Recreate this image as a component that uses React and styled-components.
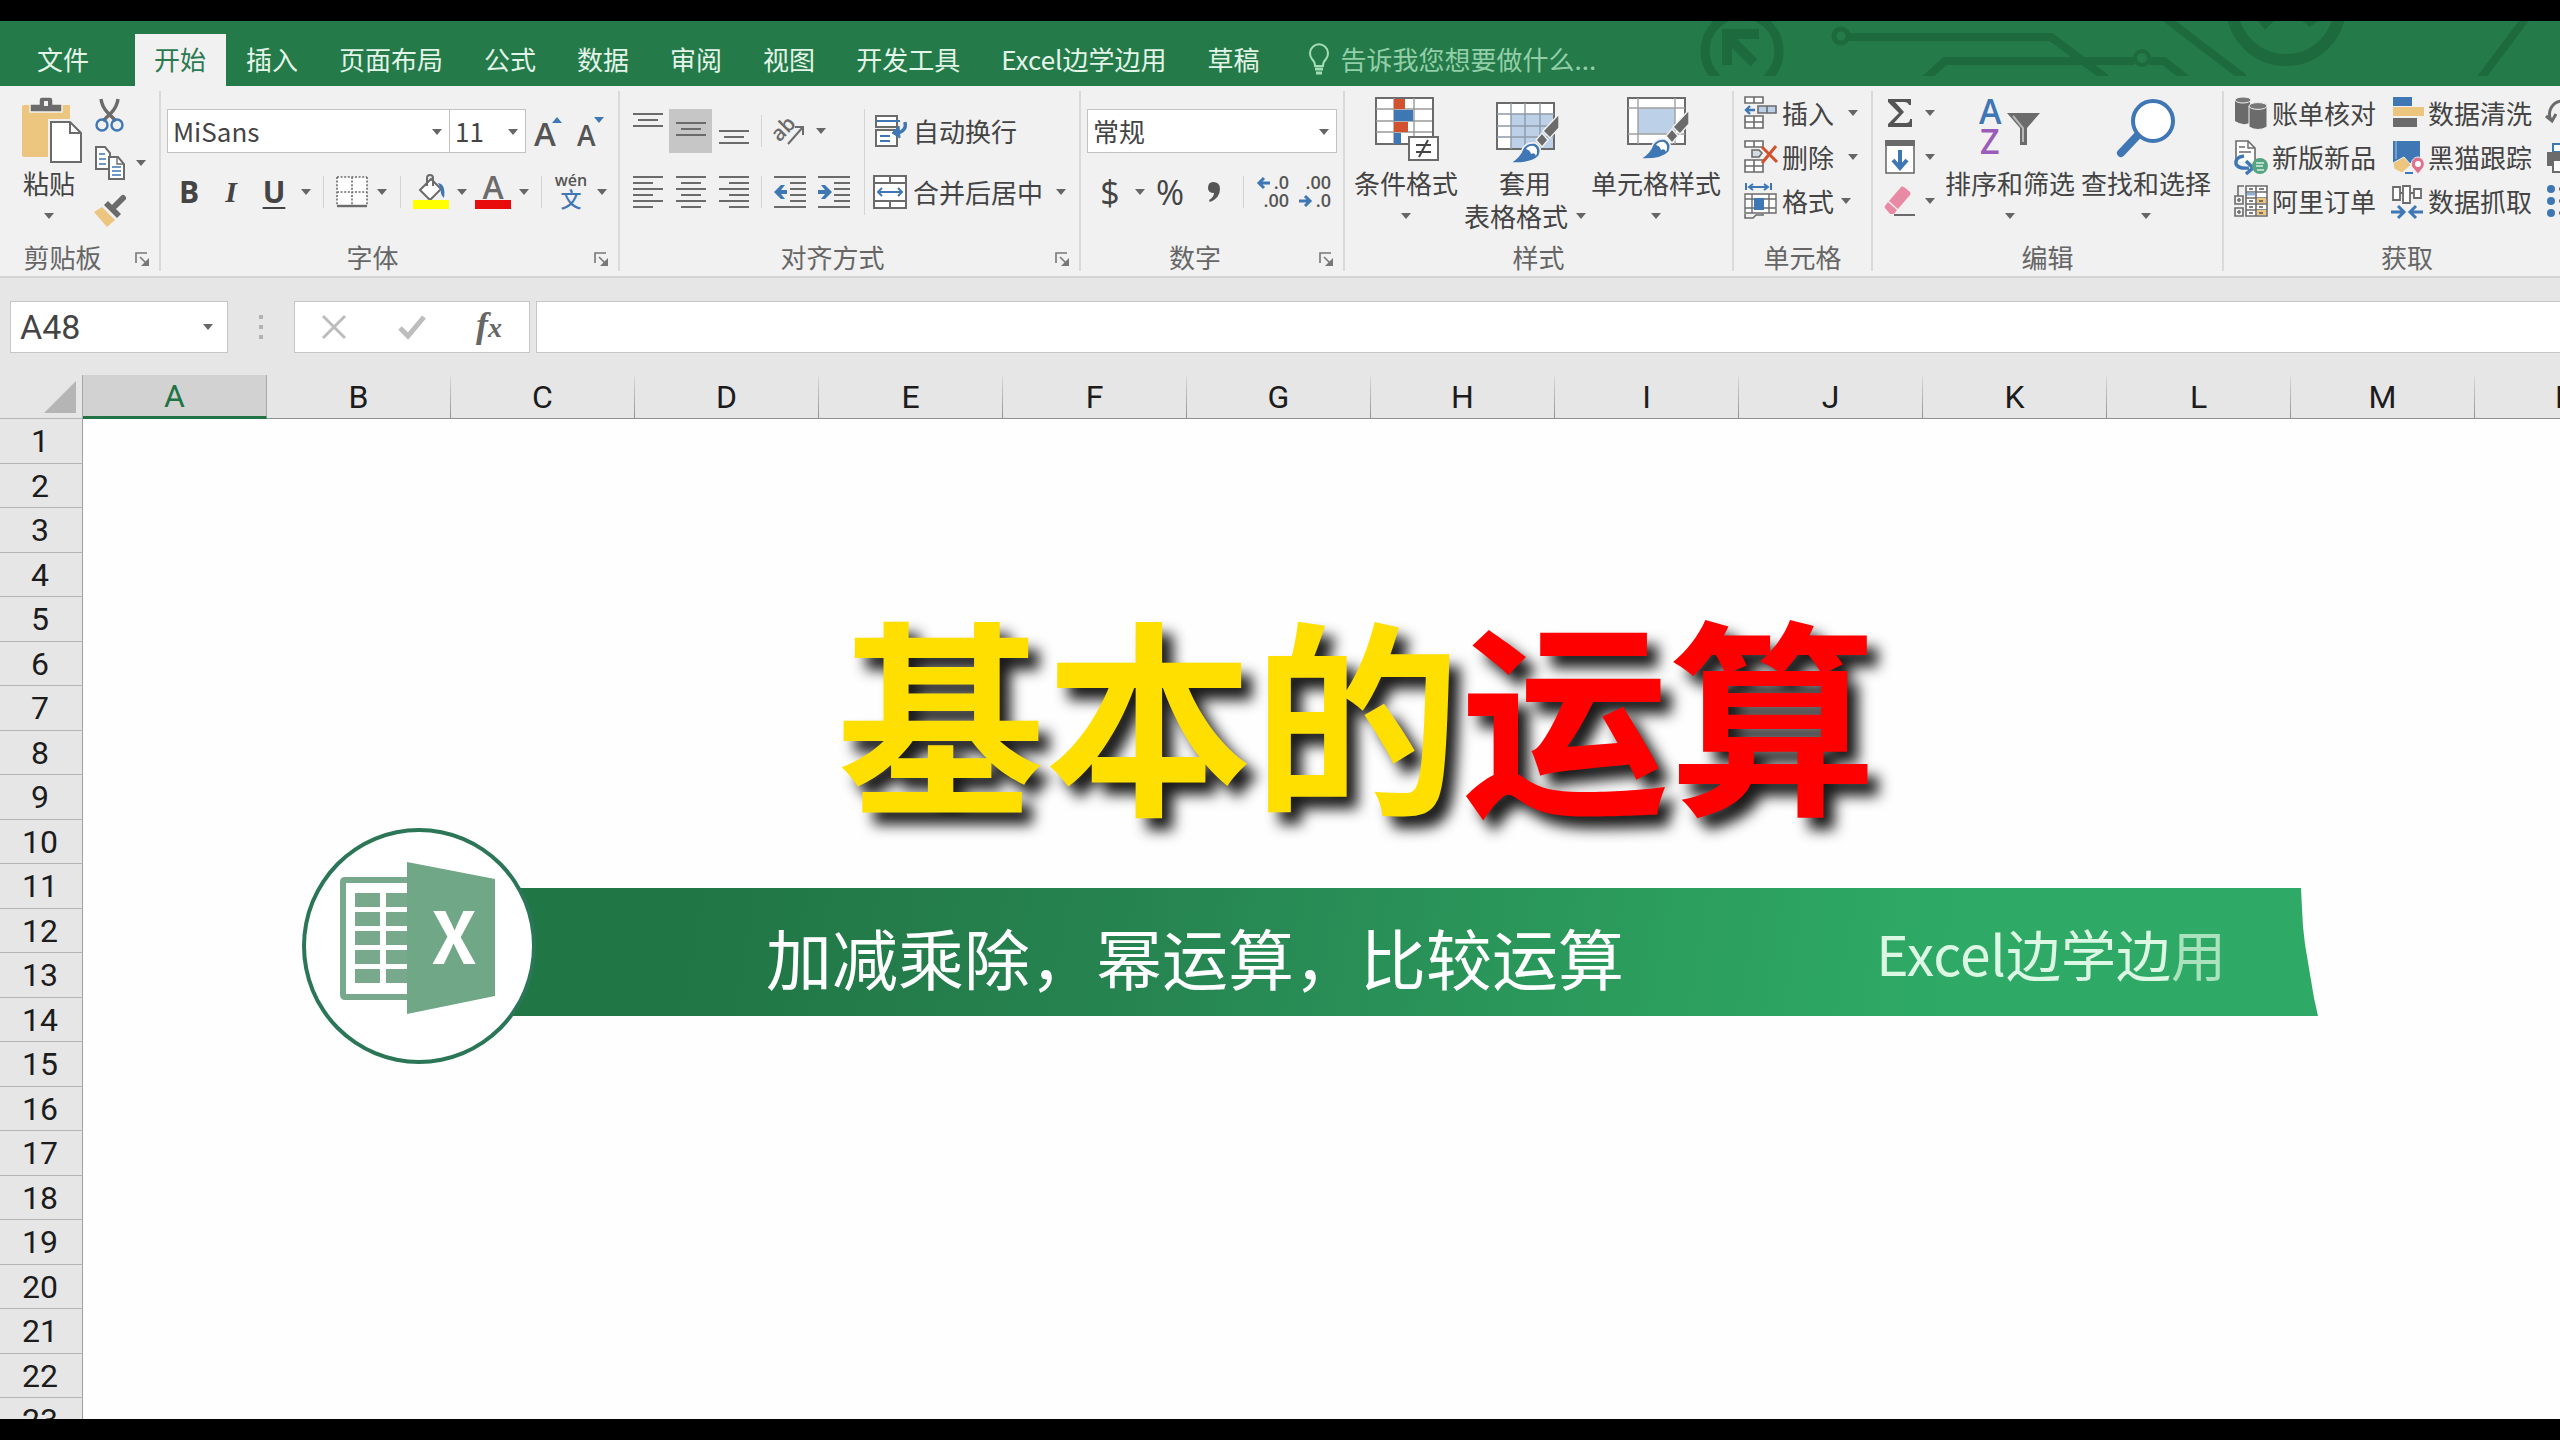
import React from 'react';
import styled, { createGlobalStyle, css } from 'styled-components';

const GREY = '#6b6b6b';
const BLUE = '#3f77b5';
const RED = '#d2512e';
const SAND = '#ecc57f';
const UI_FONT = '"Noto Sans CJK SC", "Open Sans", sans-serif';

const GlobalStyle = createGlobalStyle`
  *, *::before, *::after { box-sizing: border-box; }
  html, body { margin: 0; background: #000; overflow: hidden; }
  body { font-family: ${UI_FONT}; font-size: 26px; color: #444; }
  button, input, select { font: inherit; color: inherit; margin: 0; }
  svg { display: block; flex: none; overflow: visible; }
`;

/* ---------- window ---------- */

const Window = styled.div`
  display: flex;
  flex-direction: column;
  height: 100vh;
  border: solid #000;
  border-width: 21px 0;
  background: #e6e6e6;
  overflow: hidden;
`;

/* ---------- tab strip ---------- */

const TabStrip = styled.nav`
  position: relative;
  display: flex;
  align-items: flex-end;
  flex: none;
  height: 65px;
  background: #247a49;
  overflow: hidden;
`;

const Circuit = styled.svg`
  position: absolute;
  top: 0;
  right: 0;
  overflow: hidden;
  fill: none;
  stroke: #1e6a3f;
`;

const Tab = styled.button`
  flex: none;
  height: 52px;
  padding: 0 21px 2px 20px;
  border: 0;
  line-height: 48px;
  white-space: nowrap;
  background: transparent;
  color: #e3f4e8;
  ${(p) => p.$file && css`padding: 0 37px 2px; margin-right: 9px;`}
  ${(p) => p.$active && css`padding: 0 20px 2px 19px; background: #f1f1f1; color: #2b7a50;`}
`;

const TellMe = styled.label`
  display: flex;
  align-items: center;
  gap: 10px;
  height: 52px;
  margin-left: 28px;
`;

const TellMeInput = styled.input`
  width: 300px;
  height: 52px;
  padding: 0 0 4px;
  border: 0;
  background: transparent;
  &::placeholder { color: #92cfa8; opacity: 1; }
`;

/* ---------- ribbon ---------- */

const Ribbon = styled.div`
  display: flex;
  flex: none;
  height: 192px;
  background: #f1f1f1;
  border-bottom: 2px solid #d4d4d4;
  overflow: hidden;
`;

const GroupBox = styled.section`
  display: flex;
  flex-direction: column;
  flex: none;
  width: ${(p) => p.$w}px;
`;

const Divider = styled.div`
  flex: none;
  width: 2px;
  margin: 5px 0;
  background: #dadada;
`;

const GroupBody = styled.div`
  display: flex;
  flex: 1;
  padding-left: ${(p) => p.$pad || 6}px;
`;

const GroupFoot = styled.div`
  display: flex;
  align-items: center;
  flex: none;
  height: 38px;
`;

const GroupLabel = styled.h2`
  flex: 1;
  margin: 0;
  font-size: 26px;
  font-weight: 400;
  line-height: 38px;
  text-align: center;
  color: #666;
`;

const Launcher = styled.button`
  display: flex;
  justify-content: center;
  width: 34px;
  padding: 4px 0 0;
  border: 0;
  background: transparent;
`;

const TwoRows = styled.div`
  display: flex;
  flex-direction: column;
  gap: 17px;
  padding-top: 23px;
`;

const Stack = styled.div`
  display: flex;
  flex-direction: column;
  padding-top: 5px;
  margin-right: ${(p) => p.$gap || 0}px;
`;

const Row = styled.div`
  display: flex;
  align-items: center;
  height: ${(p) => p.$h || 44}px;
`;

const Tool = styled.button`
  display: flex;
  align-items: center;
  justify-content: center;
  flex: none;
  width: ${(p) => p.$w || 44}px;
  height: 100%;
  padding: 0;
  border: 0;
  background: ${(p) => (p.$on ? '#c6c6c6' : 'transparent')};
`;

const Letter = styled.span`
  font-size: ${(p) => (p.$big ? 34 : 30)}px;
  line-height: 44px;
  font-weight: ${(p) => (p.$bold ? 700 : 400)};
  font-style: ${(p) => (p.$italic ? 'italic' : 'normal')};
  font-family: ${(p) => (p.$italic ? '"Liberation Serif", serif' : '"Open Sans", sans-serif')};
  text-decoration: ${(p) => (p.$under ? 'underline' : 'none')};
  text-decoration-thickness: 2px;
  text-underline-offset: 4px;
`;

const Sep = styled.div`
  flex: none;
  width: 1px;
  height: ${(p) => p.$h || 32}px;
  margin: ${(p) => p.$top || 0}px ${(p) => p.$m || 8}px 0;
  background: #d4d4d4;
`;

const TextTool = styled.button`
  display: flex;
  align-items: center;
  flex: none;
  height: 44px;
  padding: 0;
  border: 0;
  line-height: 44px;
  white-space: nowrap;
  background: transparent;
  & > span { margin: 0 ${(p) => p.$after || 0}px 0 ${(p) => p.$gap || 4}px; }
`;

const BigTool = styled.button`
  display: flex;
  flex-direction: column;
  align-items: center;
  flex: none;
  width: ${(p) => p.$w}px;
  padding: 6px 0 0;
  border: 0;
  background: transparent;
  white-space: nowrap;
`;

const BigIcon = styled.span`
  display: flex;
  align-items: center;
  height: 74px;
`;

const BigLine = styled.span`
  display: flex;
  align-items: center;
  gap: 8px;
  height: 33px;
  line-height: 33px;
`;

const ComboBox = styled.label`
  position: relative;
  flex: none;
  width: ${(p) => p.$w}px;
  height: 44px;
  margin-right: ${(p) => (p.$joined ? '-1px' : 0)};
  & > svg { position: absolute; right: 8px; top: 20px; pointer-events: none; }
`;

const Select = styled.select`
  width: 100%;
  height: 44px;
  padding: 0 5px 2px;
  border: 1px solid #c3c3c3;
  border-radius: 0;
  appearance: none;
  background: #fff;
`;

/* ---------- formula bar ---------- */

const FormulaBar = styled.div`
  display: flex;
  align-items: center;
  flex: none;
  height: 97px;
  padding-left: 10px;
`;

const NameBox = styled.label`
  position: relative;
  flex: none;
  width: 218px;
  height: 52px;
  & > svg { position: absolute; right: 15px; top: 23px; }
`;

const Field = styled.input`
  width: 100%;
  height: 52px;
  padding: 0 9px;
  border: 1px solid #c6c6c6;
  border-radius: 0;
  background: #fff;
  font-family: Roboto, sans-serif;
  font-size: 34px;
`;

const Dots = styled.div`
  display: grid;
  gap: 6px;
  flex: none;
  width: 66px;
  justify-content: center;
  & > i { width: 4px; height: 4px; background: #b2b2b2; }
`;

const FormulaTools = styled.div`
  display: flex;
  flex: none;
  width: 236px;
  height: 52px;
  margin-right: 6px;
  border: 1px solid #c6c6c6;
  background: #fff;
`;

const Fx = styled.em`
  font-family: "Liberation Serif", serif;
  font-size: 36px;
  font-weight: 700;
  line-height: 40px;
  color: #666;
  & > small { font-size: 28px; }
`;

const FormulaField = styled.label`
  flex: 1;
  margin-right: -1px;
`;

/* ---------- sheet ---------- */

const Sheet = styled.main`
  position: relative;
  flex: 1;
  min-height: 0;
  overflow: hidden;
  background: #fefefe;
`;

const Grid = styled.table`
  width: 2659px;
  table-layout: fixed;
  border-collapse: separate;
  border-spacing: 0;
  font-family: Roboto, sans-serif;
  font-size: 32px;
  color: #1c1c1c;
`;

const Corner = styled.th`
  width: 83px;
  height: 44px;
  padding: 0 6px 5px 0;
  border-bottom: 1px solid #b5b5b5;
  border-right: 1px solid #a8a8a8;
  background: #e6e6e6;
  vertical-align: bottom;
  & > svg { margin-left: auto; }
`;

const ColHead = styled.th`
  width: 184px;
  height: 44px;
  padding: 0;
  border-bottom: 1px solid #949494;
  border-right: 1px solid;
  border-image: linear-gradient(#dcdcdc, #8f8f8f) 1;
  background: #e6e6e6;
  font-weight: 400;
  line-height: 40px;
  ${(p) => p.$active && css`
    border-image: none;
    border-right-color: #a8a8a8;
    border-bottom: 3px solid #217346;
    background: #d2d2d2;
    color: #217346;
  `}
`;

const SheetRow = styled.tr`
  height: 44px;
  &:nth-child(odd) { height: 45px; }
`;

const RowHead = styled.th`
  padding: 0 2px 0 0;
  border-right: 1px solid #a0a0a0;
  border-bottom: 1px solid #b5b5b5;
  background: #e6e6e6;
  font-weight: 400;
  line-height: 40px;
`;

const Cells = styled.td`
  padding: 0;
`;

const Title = styled.h1`
  position: absolute;
  left: 837px;
  top: 230px;
  margin: 0;
  font-size: 208px;
  font-weight: 700;
  line-height: 1;
  white-space: nowrap;
  color: #ffdf00;
  text-shadow: 11px 12px 14px rgba(0, 0, 0, 0.9);
  & > span { color: #f00; }
`;

const Banner = styled.div`
  position: absolute;
  left: 302px;
  right: 242px;
  top: 453px;
  display: flex;
  align-items: center;
`;

const Badge = styled.div`
  position: relative;
  z-index: 1;
  display: flex;
  align-items: center;
  flex: none;
  width: 234px;
  height: 236px;
  padding: 0 0 16px 34px;
  border: 4px solid #2a7657;
  border-radius: 50%;
  background: #fff;
`;

const Bar = styled.div`
  display: flex;
  align-items: center;
  justify-content: space-between;
  flex: 1;
  height: 128px;
  margin: 12px 0 0 -60px;
  padding: 0 92px 0 290px;
  background: linear-gradient(100deg, #217645 12%, #268451 36%, #2c9f5e 66%, #2eaa66 80%);
  clip-path: polygon(
    0 0, calc(100% - 17px) 0, calc(100% - 16px) 16%, calc(100% - 15px) 30%, calc(100% - 13px) 44%,
    calc(100% - 10px) 58%, calc(100% - 7px) 72%, calc(100% - 4px) 86%, 100% 100%, 0 100%
  );
  white-space: nowrap;
`;

const Topic = styled.p`
  margin: 0;
  padding-top: 8px;
  font-size: 66px;
  line-height: 80px;
  color: #fff;
`;

const Channel = styled.p`
  margin: 0;
  font-size: 55px;
  line-height: 80px;
  color: #dcf7e3;
  & > span { color: #a9e2bd; }
`;

/* ---------- icons ---------- */

const Svg = ({ w = 34, h = 34, children, ...rest }) => (
  <svg width={w} height={h} viewBox={`0 0 ${w} ${h}`} fill="none" aria-hidden="true" {...rest}>
    {children}
  </svg>
);

const Caret = () => (
  <Svg w={10} h={6}><path d="M0 0H10L5 6Z" fill="#666" /></Svg>
);

const Lines = ({ rows, h }) => (
  <Svg w={30} h={h}>
    {rows.map(([x1, x2, y]) => (
      <path key={y} d={`M${x1} ${y}H${x2}`} stroke={GREY} strokeWidth="2" />
    ))}
  </Svg>
);

const PasteIcon = () => (
  <Svg w={60} h={66}>
    <g transform="translate(3 1)">
      <path d="M2 8H48V60H2Q0 60 0 58V10Q0 8 2 8Z" fill={SAND} />
      <path d="M8 15V7H17V3Q17 0 20 0H28Q31 0 31 3V7H40V15Z" fill={GREY} stroke="#f1f1f1" strokeWidth="1.5" />
      <rect x="22" y="4" width="4" height="5" fill="#f1f1f1" />
      <path d="M28 24H48L60 36V65H28Z" fill="#fff" stroke="#f1f1f1" strokeWidth="4" />
      <path d="M29 25H48L59 36V65H29Z" fill="#fff" stroke={GREY} strokeWidth="2" />
      <path d="M48 25V36H59" stroke={GREY} strokeWidth="2" />
    </g>
  </Svg>
);

const CutIcon = () => (
  <Svg w={30} h={33}>
    <path d="M6 0Q7 8 13 14L21 22" stroke={GREY} strokeWidth="3.4" />
    <path d="M23 0Q22 8 16 14L8 22" stroke={GREY} strokeWidth="3.4" />
    <ellipse cx="7" cy="26" rx="5.5" ry="5.5" stroke={BLUE} strokeWidth="2.4" />
    <ellipse cx="22" cy="26" rx="5.5" ry="5.5" stroke={BLUE} strokeWidth="2.4" />
  </Svg>
);

const CopyIcon = () => (
  <Svg w={30} h={34}>
    <path d="M1 1H10L15 7V23H1Z" fill="#fff" stroke={GREY} strokeWidth="2" />
    <path d="M4 8H10M4 13H11M4 18H11" stroke={BLUE} strokeWidth="1.4" />
    <path d="M14 11H23L29 18V33H14Z" fill="#fff" stroke={GREY} strokeWidth="2" />
    <path d="M22 11V18H29" stroke={GREY} strokeWidth="1.4" />
    <path d="M17 21H26M17 25H26M17 29H26" stroke={BLUE} strokeWidth="1.4" />
  </Svg>
);

const PainterIcon = () => (
  <Svg w={34} h={30}>
    <path d="M30 2L22 10" stroke={GREY} strokeWidth="6" strokeLinecap="round" />
    <path d="M15 5L28 18L24 22L11 9Z" fill={GREY} />
    <path d="M9 11L22 24L14 31L1 16Z" fill={SAND} />
  </Svg>
);

const LauncherIcon = () => (
  <Svg w={14} h={14}>
    <path d="M1 11V1H12" stroke="#777" strokeWidth="1.6" />
    <path d="M5 5L12 12" stroke="#777" strokeWidth="1.6" />
    <path d="M14 6V14H6Z" fill="#777" />
  </Svg>
);

const SizeIcon = ({ up }) => (
  <Svg w={34} h={34}>
    <text x="3" y="32" fontFamily="Open Sans, sans-serif" fontWeight="600" fontSize={up ? 33 : 28} fill="#555">A</text>
    {up
      ? <path d="M21 9L26 3L31 9Z" fill={BLUE} />
      : <path d="M20 3H30L25 9Z" fill={BLUE} />}
  </Svg>
);

const BorderIcon = () => (
  <Svg w={32} h={32}>
    <rect x="1" y="1" width="30" height="29" fill="#fff" />
    <path d="M1 1H31M1 1V29M31 1V29M16 1V29M1 16H31" stroke={GREY} strokeWidth="1.6" strokeDasharray="2 1.6" />
    <path d="M1 30H31" stroke={GREY} strokeWidth="2.4" />
  </Svg>
);

const FillIcon = () => (
  <Svg w={36} h={36}>
    <path d="M7 16L18 5L28 15L17 26Z" fill="#fff" stroke={GREY} strokeWidth="2" />
    <path d="M14 12V4Q14 1 17 1Q20 1 20 4V12" stroke={GREY} strokeWidth="2" />
    <path d="M25 9Q33 10 31 24Q27 21 28 15Z" fill={BLUE} />
    <rect y="26" width="36" height="9" fill="#ff0" />
  </Svg>
);

const FontColorIcon = () => (
  <Svg w={36} h={36}>
    <text x="18" y="25" textAnchor="middle" fontFamily="Open Sans, sans-serif" fontWeight="600" fontSize="32" fill={GREY}>A</text>
    <rect y="26" width="36" height="9" fill="#e80c0c" />
  </Svg>
);

const PinyinIcon = () => (
  <Svg w={34} h={40}>
    <text x="17" y="14" textAnchor="middle" fontFamily="Open Sans, sans-serif" fontWeight="600" fontSize="16" fill="#555">wén</text>
    <text x="17" y="35" textAnchor="middle" fontFamily="Noto Sans CJK SC, sans-serif" fontWeight="500" fontSize="21" fill={BLUE}>文</text>
  </Svg>
);

const OrientIcon = () => (
  <Svg w={34} h={32}>
    <text x="3" y="24" transform="rotate(-45 9 22)" fontFamily="Open Sans, sans-serif" fontWeight="600" fontSize="21" fill={GREY}>ab</text>
    <path d="M15 29L30 12M22 12H30V20" stroke={GREY} strokeWidth="2" />
  </Svg>
);

const IndentIcon = ({ out }) => (
  <Svg w={34} h={32}>
    <path d="M1 1H33M17 7H33M17 13H33M17 19H33M17 25H33M1 31H33" stroke={GREY} strokeWidth="2" />
    {out
      ? <path d="M1 16L8 9H12L8 14H14V18H8L12 23H8Z" fill={BLUE} />
      : <path d="M15 16L8 9H4L8 14H1V18H8L4 23H8Z" fill={BLUE} />}
  </Svg>
);

const WrapIcon = () => (
  <Svg w={34} h={34}>
    <g transform="translate(1 1)">
      <path d="M2 1H23V12H2ZM2 15H23V31H2Z" fill="#fff" stroke={GREY} strokeWidth="2" />
      <path d="M3 6H26" stroke={BLUE} strokeWidth="2" />
      <path d="M31 7Q33 16 23 18" stroke={BLUE} strokeWidth="3.4" />
      <path d="M25 11L18 18L26 23Z" fill={BLUE} stroke={BLUE} />
      <path d="M6 21H16M6 26H16" stroke={BLUE} strokeWidth="2" />
    </g>
  </Svg>
);

const MergeIcon = () => (
  <Svg w={34} h={34}>
    <path d="M1 1H33V33H1ZM1 8H33M1 26H33M17 1V8M17 26V33" fill="#fff" stroke={GREY} strokeWidth="2" />
    <path d="M5 17H29M9 13L5 17L9 21M25 13L29 17L25 21" stroke={BLUE} strokeWidth="2" />
  </Svg>
);

const DecimalIcon = ({ more }) => (
  <Svg w={34} h={36}>
    <g fontFamily="Open Sans, sans-serif" fontSize="18" fontWeight="600" fill="#555" textAnchor="end">
      <text x="33" y="15">{more ? '.0' : '.00'}</text>
      <text x="33" y="33">{more ? '.00' : '.0'}</text>
    </g>
    {more
      ? <path d="M14 9H3M8 4L3 9L8 14" stroke={BLUE} strokeWidth="3" />
      : <path d="M1 27H12M7 22L12 27L7 32" stroke={BLUE} strokeWidth="3" />}
  </Svg>
);

const CommaIcon = () => (
  <Svg w={14} h={22}>
    <path d="M6 1Q13 1 13 8Q13 17 3 21L2 19Q7 16 7 12Q1 12 1 7Q1 1 6 1Z" fill="#555" />
  </Svg>
);

const CondIcon = () => (
  <Svg w={62} h={66}>
    <rect x="1" y="2" width="57" height="46" fill="#fff" stroke={GREY} strokeWidth="2" />
    <path d="M19 2V48M39 2V48M1 13H57M1 25H57M1 36H57" stroke="#999" strokeWidth="1.4" />
    <path d="M19 3H30V13H19ZM19 26H33V36H19Z" fill={RED} />
    <path d="M19 14H38V25H19ZM19 37H26V48H19Z" fill={BLUE} />
    <rect x="34" y="41" width="29" height="23" fill="#fff" stroke={GREY} strokeWidth="2" />
    <path d="M41 49H56M41 56H56M53 44L44 61" stroke="#444" strokeWidth="2" />
  </Svg>
);

const Brush = () => (
  <g>
    <path d="M63 18V32L54 42L47 35Z" fill={GREY} stroke="#f1f1f1" strokeWidth="1.4" />
    <path d="M46 37L52 44L46 51L40 44Z" fill={GREY} stroke="#f1f1f1" strokeWidth="1.4" />
    <path d="M14 67Q24 61 27 52Q31 46 39 47Q47 51 43 60Q36 68 14 67Z" fill={BLUE} stroke="#f1f1f1" strokeWidth="1.6" />
    <path d="M30 53Q33 49 38 50Q43 53 40 60Q39 56 35 58Q34 54 30 53Z" fill="#fff" />
  </g>
);

const TableStyleIcon = () => (
  <Svg w={66} h={66}>
    <g transform="translate(4 0)">
      <rect x="1" y="7" width="57" height="46" fill="#fff" stroke={GREY} strokeWidth="2" />
      <rect x="15" y="18" width="42" height="34" fill="#bcd0e8" />
      <path d="M15 7V53M29 7V53M44 7V53M1 18H58M1 30H58M1 41H58" stroke="#8f9aa8" strokeWidth="1.4" />
      <Brush />
    </g>
  </Svg>
);

const CellStyleIcon = () => (
  <Svg w={66} h={66}>
    <g transform="translate(4 0)">
      <rect x="1" y="2" width="57" height="46" fill="#fff" stroke={GREY} strokeWidth="2" />
      <rect x="11" y="12" width="37" height="26" fill="#bcd0e8" />
      <path d="M11 2V48M48 2V48M1 12H58M1 38H58" stroke="#a0a0a0" strokeWidth="1.4" />
      <g transform="translate(-1 -4)"><Brush /></g>
    </g>
  </Svg>
);

const CellBlocks = () => (
  <path d="M1 1H19V7H1ZM10 1V7M1 20H19V32H1ZM10 20V32M1 26H19" fill="#fff" stroke={GREY} strokeWidth="1.6" />
);

const InsertIcon = () => (
  <Svg>
    <CellBlocks />
    <path d="M14 10H32V17H14ZM23 10V17" fill="#bcd0e8" stroke={GREY} strokeWidth="1.6" />
    <path d="M11 14H2M6 10L2 14L6 18" stroke={BLUE} strokeWidth="2.4" />
  </Svg>
);

const DeleteIcon = () => (
  <Svg>
    <CellBlocks />
    <path d="M8 10H15L18 13L15 17H8Z" fill="#d5dbe3" stroke={GREY} strokeWidth="1.6" />
    <path d="M18 7L33 22M32 6L18 23" stroke={RED} strokeWidth="3" />
  </Svg>
);

const FormatIcon = () => (
  <Svg h={38}>
    <path d="M2 1V8M27 1V8M5 5H24M9 2L5 5L9 8M20 2L24 5L20 8" stroke={BLUE} strokeWidth="2" />
    <path d="M1 12H32V31H1ZM8 12V31M25 12V31M1 17H32M1 26H32" fill="#fff" stroke={GREY} strokeWidth="1.4" />
    <rect x="10" y="16" width="10" height="12" fill={BLUE} />
    <path d="M1 32V36H9L12 33H19V32" stroke={GREY} strokeWidth="1.6" />
  </Svg>
);

const SumIcon = () => (
  <Svg w={26} h={30}>
    <path d="M1 1H24V7H22Q21 4 17 4H8L17 14L7 25H19Q23 25 23 21H25V29H1V26L12 15L1 4Z" fill="#555" />
  </Svg>
);

const FillDownIcon = () => (
  <Svg w={30} h={34}>
    <rect x="1" y="2" width="28" height="31" fill="#fff" stroke={GREY} strokeWidth="1.6" />
    <rect width="30" height="6" fill={GREY} />
    <path d="M15 10V27M8 20L15 28L22 20" stroke={BLUE} strokeWidth="4" />
  </Svg>
);

const EraserIcon = () => (
  <Svg w={32} h={30}>
    <path d="M17 1Q18 0 20 1L26 6Q27 7 26 9L14 23L5 15Z" fill="#e98aa4" />
    <path d="M4 16L13 24L10 28H6L1 22Q0 21 1 20Z" fill="#e98aa4" />
    <path d="M10 29H31" stroke={GREY} strokeWidth="2" />
  </Svg>
);

const SortIcon = () => (
  <Svg w={62} h={66}>
    <g fontFamily="Open Sans, sans-serif" fontSize="34" fontWeight="600">
      <text x="0" y="28" fill={BLUE}>A</text>
      <text x="1" y="58" fill="#9a5cb8">Z</text>
    </g>
    <path d="M28 17H61L48 32V49H41V32Z" fill={GREY} />
    <path d="M34 20L44 32V46" stroke="#b8b8b8" strokeWidth="2" />
  </Svg>
);

const FindIcon = () => (
  <Svg w={60} h={66}>
    <path d="M5 57L22 39" stroke={BLUE} strokeWidth="8" strokeLinecap="round" />
    <ellipse cx="37" cy="25" rx="20" ry="20" fill="#fff" stroke={BLUE} strokeWidth="4" />
  </Svg>
);

const BarrelsIcon = () => (
  <Svg h={36}>
    <path d="M1 5V26Q8 31 16 28V5Z" fill={GREY} />
    <ellipse cx="9" cy="5" rx="8" ry="3" fill="#777" stroke="#f1f1f1" />
    <path d="M15 11V32Q24 37 33 32V11Z" fill={GREY} stroke="#f1f1f1" />
    <ellipse cx="24" cy="11" rx="9" ry="3.4" fill="#777" stroke="#f1f1f1" />
  </Svg>
);

const NewPageIcon = () => (
  <Svg h={36}>
    <path d="M2 22V2H14L21 9V22" fill="#fff" stroke={GREY} strokeWidth="1.6" />
    <path d="M14 2V9H21M5 8H11M5 13H17" stroke={GREY} strokeWidth="1.4" />
    <path d="M10 17Q1 18 2 25Q4 30 15 29M12 22L19 29L12 35" stroke={BLUE} strokeWidth="3.4" />
    <circle cx="26" cy="27" r="8" fill="#56a382" />
    <path d="M22 24H30M22 27H29M23 31H30" stroke="#d8eee3" strokeWidth="1.6" />
  </Svg>
);

const OrderIcon = () => (
  <Svg>
    <path d="M12 2H33V32H12ZM22 2V32M12 8H33M12 14H33M12 20H33M12 26H33" fill="#fff" stroke={GREY} strokeWidth="1.6" />
    <path d="M23 14H32V19H23ZM23 26H32V31H23Z" fill={SAND} />
    <path d="M13 10H21" stroke="#8fb0d6" strokeWidth="3" />
    <path d="M4 12V2H10M1 12H9V20H1ZM1 24H9V32H1ZM5 14V18M3 16H7M5 26V30M3 28H7" stroke={GREY} strokeWidth="1.6" />
    <path d="M15 5H19M25 5H30M15 17H19M15 23H19M15 29H19M25 17H29M25 23H29M25 29H29" stroke="#555" strokeWidth="1.6" />
  </Svg>
);

const CleanIcon = () => (
  <Svg>
    <g transform="translate(1 -1)">
      <rect x="2" y="2" width="19" height="9" fill={BLUE} />
      <rect x="2" y="12" width="31" height="9" fill={SAND} />
      <rect x="2" y="23" width="24" height="9" fill={GREY} />
    </g>
  </Svg>
);

const TrackIcon = () => (
  <Svg h={36}>
    <path d="M3 2H30V24H3Z" fill={BLUE} />
    <path d="M6 2V20" stroke="#8fb0d6" strokeWidth="1.4" />
    <path d="M3 24L14 18L21 26L12 34L4 30Z" fill={SAND} stroke="#f1f1f1" />
    <path d="M28 18A7 7 0 0 1 33 29L28 35L22 28A7 7 0 0 1 28 18Z" fill="#e0718c" stroke="#f1f1f1" />
    <circle cx="28" cy="25" r="3" fill="#fff" />
    <path d="M15 34H23" stroke={BLUE} strokeWidth="2" />
  </Svg>
);

const GrabIcon = () => (
  <Svg h={36}>
    <path d="M3 4H10V17H3ZM13 3H20V20H13ZM24 6H31V15H24ZM10 10H13M20 10H24" fill="#fff" stroke={GREY} strokeWidth="1.8" />
    <path d="M1 29H13M8 23L14 29L8 35M33 29H21M26 23L20 29L26 35" stroke={BLUE} strokeWidth="3" />
  </Svg>
);

const RefreshIcon = () => (
  <Svg>
    <path d="M16 5A13 13 0 0 0 5 24M0 20L6 25L10 18M16 31A13 13 0 0 0 29 14" stroke={GREY} strokeWidth="3" />
  </Svg>
);

const PrintIcon = () => (
  <Svg>
    <path d="M7 4H28V12H7Z" fill="#fff" stroke={BLUE} strokeWidth="2" />
    <path d="M1 12H33V26H1Z" fill={GREY} />
    <path d="M7 20H27V32H7Z" fill="#fff" stroke={GREY} strokeWidth="2" />
  </Svg>
);

const ListIcon = () => (
  <Svg>
    <g fill={BLUE}><circle cx="5" cy="5" r="4" /><circle cx="5" cy="17" r="4" /><circle cx="5" cy="29" r="4" /></g>
    <path d="M13 5H33M13 17H33M13 29H33" stroke={GREY} strokeWidth="3" />
  </Svg>
);

const BulbIcon = () => (
  <Svg w={22} h={32} stroke="#a5dcb8" strokeWidth="2">
    <path d="M7 22Q7 18 4 15A9 9 0 1 1 18 15Q15 18 15 22Z" />
    <path d="M7 25H15M8 29H14" strokeWidth="3" />
  </Svg>
);

const ExcelLogo = () => (
  <Svg w={156} h={152}>
    <path d="M68 18H5Q3 18 3 20V132Q3 135 5 135H68" stroke="#79a98c" strokeWidth="6" />
    <g fill="#79a98c">
      {[31, 50, 69, 88, 107].map((y) => (
        <path key={y} d={`M15 ${y}H40V${y + 14}H15ZM46 ${y}H67V${y + 14}H46Z`} />
      ))}
    </g>
    <path d="M67 0L155 17V134L67 152Z" fill="#70a787" />
    <text x="114" y="102" textAnchor="middle" fontFamily="Noto Sans CJK SC, sans-serif" fontWeight="700" fontSize="72" fill="#fff">X</text>
  </Svg>
);

/* ---------- composed parts ---------- */

function Group({ label, width, pad, launcher, children }) {
  return (
    <>
      <GroupBox $w={width} aria-label={label}>
        <GroupBody $pad={pad}>{children}</GroupBody>
        <GroupFoot>
          <GroupLabel>{label}</GroupLabel>
          {launcher && <Launcher aria-label={`${label}设置`}><LauncherIcon /></Launcher>}
        </GroupFoot>
      </GroupBox>
      <Divider />
    </>
  );
}

function Combo({ label, value, width, joined }) {
  return (
    <ComboBox $w={width} $joined={joined}>
      <Select aria-label={label} defaultValue={value}><option>{value}</option></Select>
      <Caret />
    </ComboBox>
  );
}

const Drop = ({ w = 18, label = '更多' }) => (
  <Tool $w={w} aria-label={label}><Caret /></Tool>
);

function Big({ width, icon, first, second }) {
  return (
    <BigTool $w={width}>
      <BigIcon>{icon}</BigIcon>
      <BigLine>{first}</BigLine>
      <BigLine>{second}<Caret /></BigLine>
    </BigTool>
  );
}

const TABS = ['插入', '页面布局', '公式', '数据', '审阅', '视图', '开发工具', 'Excel边学边用', '草稿'];
const COLUMNS = 'ABCDEFGHIJKLMN'.split('');
const ROWS = Array.from({ length: 23 }, (_, i) => i + 1);

const CELL_TOOLS = [
  ['插入', <InsertIcon />, 14],
  ['删除', <DeleteIcon />, 14],
  ['格式', <FormatIcon />, 7],
];
const FETCH_TOOLS = [
  [['账单核对', <BarrelsIcon />], ['新版新品', <NewPageIcon />], ['阿里订单', <OrderIcon />]],
  [['数据清洗', <CleanIcon />], ['黑猫跟踪', <TrackIcon />], ['数据抓取', <GrabIcon />]],
];

export default function App() {
  return (
    <Window>
      <GlobalStyle />
      <TabStrip>
        <Circuit width="1000" height="55" viewBox="1560 21 1000 55" aria-hidden="true">
          <circle cx="1742" cy="51" r="37" strokeWidth="9" />
          <path d="M1722 34H1759M1727 34V65M1727 36L1754 63" strokeWidth="10" />
          <circle cx="1841" cy="36" r="7" strokeWidth="5" />
          <path d="M1849 37H2051L2106 78M1924 80L1945 61H2134M2149 61H2164L2188 80" strokeWidth="8" />
          <circle cx="2142" cy="58" r="7" strokeWidth="4" />
          <path d="M2164 17L2244 78M2526 18L2481 78" strokeWidth="8" />
          <circle cx="2286" cy="6" r="54" strokeWidth="12" />
          <path d="M2258 21H2274L2265 30ZM2302 21H2318L2310 27Z" fill="#1e6a3f" stroke="none" />
        </Circuit>
        <Tab $file>文件</Tab>
        <Tab $active>开始</Tab>
        {TABS.map((t) => <Tab key={t}>{t}</Tab>)}
        <TellMe>
          <BulbIcon />
          <TellMeInput aria-label="告诉我您想要做什么" placeholder="告诉我您想要做什么..." />
        </TellMe>
      </TabStrip>

      <Ribbon>
        <Group label="剪贴板" width={159} launcher>
          <Big width={86} icon={<PasteIcon />} first="粘贴" />
          <Stack>
            <Row $h={48}><Tool $w={36} aria-label="剪切"><CutIcon /></Tool></Row>
            <Row $h={48}><Tool $w={36} aria-label="复制"><CopyIcon /></Tool><Drop w={26} /></Row>
            <Row $h={48}><Tool $w={36} aria-label="格式刷"><PainterIcon /></Tool></Row>
          </Stack>
        </Group>

        <Group label="字体" width={457} launcher>
          <TwoRows>
            <Row>
              <Combo label="字体名称" value="MiSans" width={283} joined />
              <Combo label="字号" value="11" width={77} />
              <Tool aria-label="增大字号"><SizeIcon up /></Tool>
              <Tool $w={42} aria-label="减小字号"><SizeIcon /></Tool>
            </Row>
            <Row>
              <Tool><Letter $bold>B</Letter></Tool>
              <Tool $w={40}><Letter $bold $italic>I</Letter></Tool>
              <Tool $w={46}><Letter $bold $under>U</Letter></Tool>
              <Drop />
              <Sep />
              <Tool $w={40} aria-label="边框"><BorderIcon /></Tool>
              <Drop w={20} />
              <Sep />
              <Tool aria-label="填充颜色"><FillIcon /></Tool>
              <Drop />
              <Tool aria-label="字体颜色"><FontColorIcon /></Tool>
              <Drop />
              <Sep />
              <Tool $w={42} aria-label="拼音"><PinyinIcon /></Tool>
              <Drop w={20} />
            </Row>
          </TwoRows>
        </Group>

        <Group label="对齐方式" width={459} launcher>
          <TwoRows>
            <Row>
              <Tool $w={43} aria-label="顶端对齐"><Lines h={40} rows={[[0, 30, 3], [5, 25, 9], [0, 30, 15]]} /></Tool>
              <Tool $w={43} $on aria-label="垂直居中"><Lines h={18} rows={[[0, 30, 1], [5, 25, 7], [0, 30, 13]]} /></Tool>
              <Tool $w={43} aria-label="底端对齐"><Lines h={40} rows={[[0, 30, 20], [5, 25, 26], [0, 30, 32]]} /></Tool>
              <Sep $m={6} />
              <Tool aria-label="方向"><OrientIcon /></Tool>
              <Drop />
            </Row>
            <Row>
              <Tool $w={43} aria-label="左对齐"><Lines h={32} rows={[[0, 30, 1], [0, 20, 7], [0, 30, 13], [0, 20, 19], [0, 30, 25], [0, 20, 31]]} /></Tool>
              <Tool $w={43} aria-label="居中"><Lines h={32} rows={[[0, 30, 1], [5, 25, 7], [0, 30, 13], [5, 25, 19], [0, 30, 25], [5, 25, 31]]} /></Tool>
              <Tool $w={43} aria-label="右对齐"><Lines h={32} rows={[[0, 30, 1], [10, 30, 7], [0, 30, 13], [10, 30, 19], [0, 30, 25], [10, 30, 31]]} /></Tool>
              <Sep $m={6} />
              <Tool aria-label="减少缩进"><IndentIcon out /></Tool>
              <Tool aria-label="增加缩进"><IndentIcon /></Tool>
            </Row>
          </TwoRows>
          <Sep $h={106} $top={23} />
          <TwoRows>
            <TextTool $gap={6}><WrapIcon /><span>自动换行</span></TextTool>
            <TextTool $gap={6} $after={13}><MergeIcon /><span>合并后居中</span><Caret /></TextTool>
          </TwoRows>
        </Group>

        <Group label="数字" width={262} launcher>
          <TwoRows>
            <Row><Combo label="数字格式" value="常规" width={250} /></Row>
            <Row>
              <Tool $w={46}><Letter $big>$</Letter></Tool>
              <Drop w={14} />
              <Tool $w={46}><Letter $big>%</Letter></Tool>
              <Tool $w={42} aria-label="千位分隔"><CommaIcon /></Tool>
              <Sep />
              <Tool $w={42} aria-label="增加小数位"><DecimalIcon more /></Tool>
              <Tool $w={42} aria-label="减少小数位"><DecimalIcon /></Tool>
            </Row>
          </TwoRows>
        </Group>

        <Group label="样式" width={387}>
          <Big width={110} icon={<CondIcon />} first="条件格式" />
          <Big width={128} icon={<TableStyleIcon />} first="套用" second="表格格式" />
          <Big width={134} icon={<CellStyleIcon />} first="单元格样式" />
        </Group>

        <Group label="单元格" width={137} pad={10}>
          <Stack>
            {CELL_TOOLS.map(([name, icon, after]) => (
              <TextTool key={name} $after={after}>{icon}<span>{name}</span><Caret /></TextTool>
            ))}
          </Stack>
        </Group>

        <Group label="编辑" width={349}>
          <Stack $gap={4}>
            <Row><Tool $w={42} aria-label="求和"><SumIcon /></Tool><Drop /></Row>
            <Row><Tool $w={42} aria-label="填充"><FillDownIcon /></Tool><Drop /></Row>
            <Row><Tool $w={42} aria-label="清除"><EraserIcon /></Tool><Drop /></Row>
          </Stack>
          <Big width={134} icon={<SortIcon />} first="排序和筛选" />
          <Big width={138} icon={<FindIcon />} first="查找和选择" />
        </Group>

        <Group label="获取" width={366} pad={10}>
          {FETCH_TOOLS.map((column) => (
            <Stack key={column[0][0]} $gap={14}>
              {column.map(([name, icon]) => (
                <TextTool key={name}>{icon}<span>{name}</span></TextTool>
              ))}
            </Stack>
          ))}
          <Stack>
            <Row><Tool $w={34} aria-label="刷新"><RefreshIcon /></Tool></Row>
            <Row><Tool $w={34} aria-label="打印"><PrintIcon /></Tool></Row>
            <Row><Tool $w={34} aria-label="列表"><ListIcon /></Tool></Row>
          </Stack>
        </Group>
      </Ribbon>

      <FormulaBar>
        <NameBox>
          <Field aria-label="名称框" defaultValue="A48" />
          <Caret />
        </NameBox>
        <Dots><i /><i /><i /></Dots>
        <FormulaTools>
          <Tool $w={78} aria-label="取消">
            <Svg w={26} h={24}><path d="M2 1L24 23M24 1L2 23" stroke="#bdbdbd" strokeWidth="3" /></Svg>
          </Tool>
          <Tool $w={78} aria-label="输入">
            <Svg w={28} h={24}><path d="M2 13L10 21L26 2" stroke="#bdbdbd" strokeWidth="5" /></Svg>
          </Tool>
          <Tool $w={76} aria-label="插入函数"><Fx>f<small>x</small></Fx></Tool>
        </FormulaTools>
        <FormulaField><Field aria-label="编辑栏" /></FormulaField>
      </FormulaBar>

      <Sheet>
        <Grid>
          <thead>
            <tr>
              <Corner aria-label="全选"><Svg w={32} h={32}><path d="M32 0V32H0Z" fill="#b5b5b5" /></Svg></Corner>
              {COLUMNS.map((c) => <ColHead key={c} scope="col" $active={c === 'A'}>{c}</ColHead>)}
            </tr>
          </thead>
          <tbody>
            {ROWS.map((r) => (
              <SheetRow key={r}>
                <RowHead scope="row">{r}</RowHead>
                <Cells colSpan={COLUMNS.length} />
              </SheetRow>
            ))}
          </tbody>
        </Grid>
        <Title>基本的<span>运算</span></Title>
        <Banner>
          <Badge><ExcelLogo /></Badge>
          <Bar>
            <Topic>加减乘除，幂运算，比较运算</Topic>
            <Channel>Excel边学边<span>用</span></Channel>
          </Bar>
        </Banner>
      </Sheet>
    </Window>
  );
}
